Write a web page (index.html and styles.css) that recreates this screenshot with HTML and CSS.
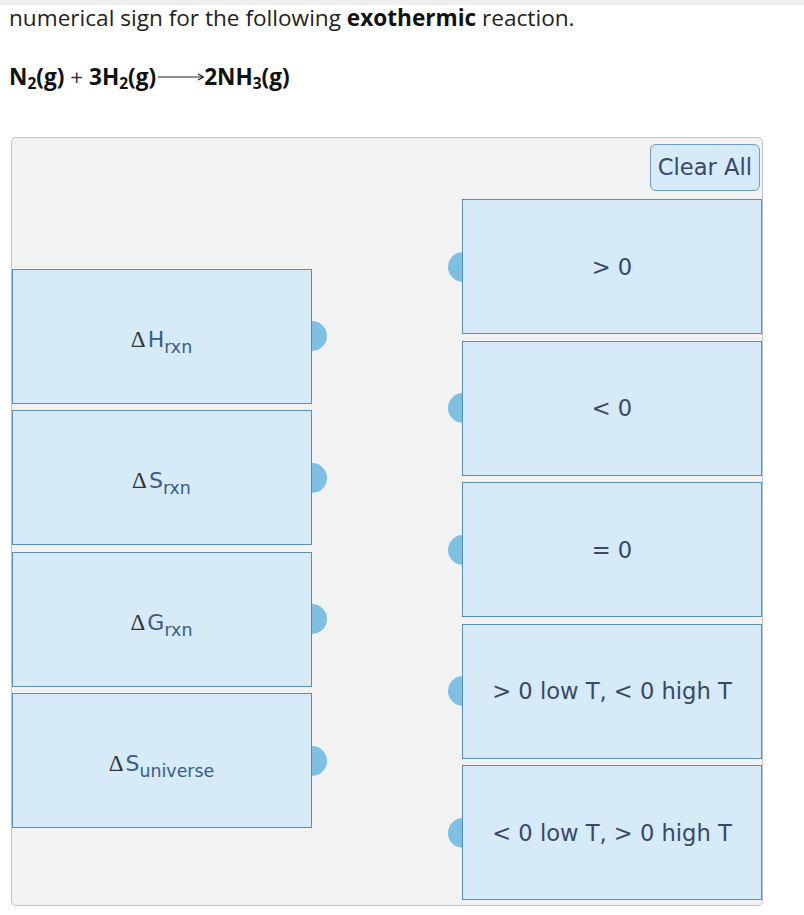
FILE: index.html
```html
<!DOCTYPE html>
<html lang="en">
<head>
  <meta charset="UTF-8" />
  <title>Reaction Signs</title>
  <link rel="stylesheet" href="styles.css">
</head>
<body>
  <div class="topbar"></div>
  <p class="prompt">numerical sign for the following <b>exothermic</b> reaction.</p>
  <p class="equation">N<sub>2</sub>(g) <span class="plus">+</span> 3H<sub>2</sub>(g)<svg class="arrow" width="47" height="10" viewBox="0 0 47 10"><path d="M0 5H45M40 2L45.5 5L40 8" fill="none" stroke="#222" stroke-width="1.2"/></svg>2NH<sub>3</sub>(g)</p>

  <div class="panel">
    <div class="col terms">
      <div class="card term"><span class="label"><span class="delta">&Delta;</span>H<sub>rxn</sub></span></div>
      <div class="card term"><span class="label"><span class="delta">&Delta;</span>S<sub>rxn</sub></span></div>
      <div class="card term"><span class="label"><span class="delta">&Delta;</span>G<sub>rxn</sub></span></div>
      <div class="card term"><span class="label"><span class="delta">&Delta;</span>S<sub>universe</sub></span></div>
    </div>
    <div class="col signs">
      <button class="clear">Clear All</button>
      <div class="card sign">&gt; 0</div>
      <div class="card sign">&lt; 0</div>
      <div class="card sign">= 0</div>
      <div class="card sign">&gt; 0 low T, &lt; 0 high T</div>
      <div class="card sign">&lt; 0 low T, &gt; 0 high T</div>
    </div>
  </div>
</body>
</html>
```

FILE: styles.css
```css
body {
  margin: 0;
  font-family: "Open Sans", "Liberation Sans", sans-serif;
  color: #222;
  background: #fff;
}

.topbar {
  height: 5px;
  background: #eeeeee;
}

.prompt {
  margin: 0;
  padding-left: 9px;
  font-size: 22.6px;
  line-height: 26px;
}

.prompt b {
  color: #111;
}

.equation {
  margin: 33px 0 0 0;
  padding-left: 9px;
  font-size: 22.6px;
  line-height: 26px;
  font-weight: bold;
  color: #111;
}

.equation sub {
  font-size: 15.5px;
  vertical-align: -4px;
  line-height: 0;
}

.equation .plus {
  font-weight: normal;
  color: #333;
}

.arrow {
  vertical-align: 3px;
  margin: 0 -1px 0 2px;
}

.panel {
  margin: 46.5px 0 0 11px;
  width: 752px;
  height: 769px;
  box-sizing: border-box;
  border: 1px solid #b9c3cc;
  border-radius: 5px;
  background: #f2f2f2;
  display: grid;
  grid-template-columns: 300px 300px;
  justify-content: space-between;
  align-items: start;
}

.col {
  display: flex;
  flex-direction: column;
  gap: 6.5px;
  isolation: isolate;
}

.terms {
  padding-top: 131px;
}

.clear {
  align-self: flex-end;
  margin: 6px 2px 2px 0;
  padding: 9px 7px 10px;
  font-family: "DejaVu Sans", Verdana, sans-serif;
  font-size: 22.6px;
  line-height: 26px;
  color: #38496a;
  background: #d6eaf7;
  border: 1px solid #6e9ec5;
  border-radius: 6px;
}

.card {
  position: relative;
  height: 135px;
  box-sizing: border-box;
  border: 1px solid #5a90b8;
  background: #d6eaf7;
  display: flex;
  align-items: center;
  justify-content: center;
  font-family: "DejaVu Sans", Verdana, sans-serif;
  font-size: 22.6px;
  color: #38496a;
}

.card::after {
  content: "";
  position: absolute;
  top: 50%;
  width: 30px;
  height: 30px;
  margin-top: -15px;
  border-radius: 50%;
  background: #7fbfe2;
  z-index: -1;
}

.term::after {
  right: -16px;
}

.sign::after {
  left: -15px;
}

.label {
  color: #3a5b88;
  line-height: 26px;
  margin: 7px 0 0 -1px;
  font-size: 22px;
}

.label .delta {
  font-family: "Liberation Serif", serif;
  font-size: 23px;
  color: #333;
  margin-right: 2px;
}

.label sub {
  font-size: 17.4px;
  vertical-align: -6px;
  line-height: 0;
}
```
